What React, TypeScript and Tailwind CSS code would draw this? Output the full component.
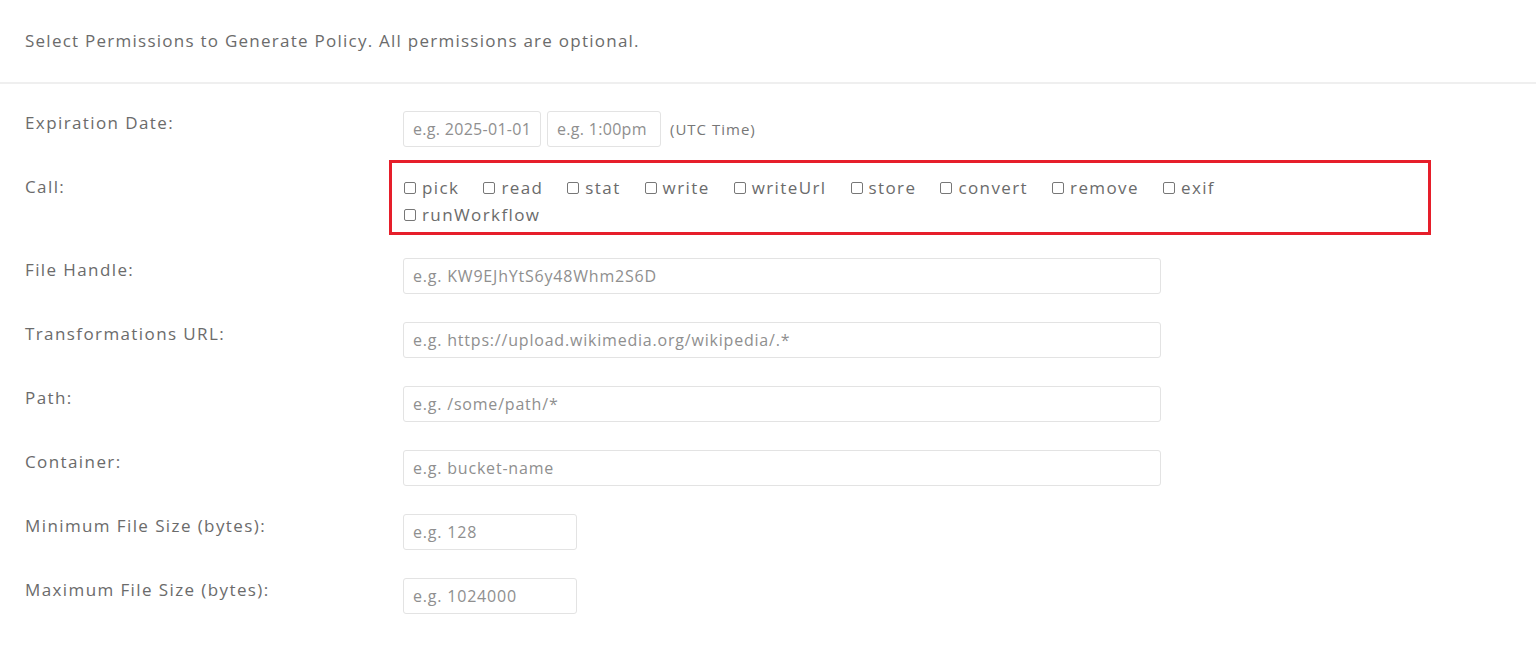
import { useState } from 'react'

const CALLS = ['pick', 'read', 'stat', 'write', 'writeUrl', 'store', 'convert', 'remove', 'exif', 'runWorkflow']

const font = { fontFamily: '"Open Sans", "Liberation Sans", sans-serif' }

function Field({ placeholder, width, tight }: { placeholder: string; width: string; tight?: boolean }) {
  return (
    <input
      type="text"
      placeholder={placeholder}
      className={`${width} ${tight ? 'tracking-[0.3px]' : 'tracking-[0.8px]'} h-[36px] rounded-[3px] border border-[#e3e3e3] bg-white px-[9px] text-[16px] text-[#555] placeholder:text-[#8f8f8f] outline-none`}
    />
  )
}

function Row({ label, children }: { label: string; children: React.ReactNode }) {
  return (
    <div className="flex items-start">
      <div className="w-[378px] shrink-0 text-[17px] leading-6 tracking-[1.4px] text-[#6b6b6b]">{label}</div>
      <div className="flex-1">{children}</div>
    </div>
  )
}

export default function App() {
  const [checked, setChecked] = useState<Record<string, boolean>>({})

  return (
    <div className="min-h-screen bg-white" style={font}>
      {/* header */}
      <div className="flex h-[84px] items-center border-b-2 border-[#efefef] px-[25px]">
        <p className="text-[17px] tracking-[1.25px] text-[#6b6b6b]">
          Select Permissions to Generate Policy. All permissions are optional.
        </p>
      </div>

      <div className="pl-[25px] pt-[27px]">
        <Row label="Expiration Date:">
          <div className="flex items-center gap-[6px]">
            <Field placeholder="e.g. 2025-01-01" width="w-[138px]" tight />
            <Field placeholder="e.g. 1:00pm" width="w-[114px]" tight />
            <span className="ml-[3px] text-[15px] tracking-[1px] text-[#777]">(UTC Time)</span>
          </div>
        </Row>

        <div className="mt-[13px] flex items-start">
          <div className="w-[378px] shrink-0 pt-[15px] text-[17px] leading-6 tracking-[1.4px] text-[#6b6b6b]">
            Call:
          </div>
          <div className="ml-[-14px] h-[75px] w-[1042px] border-[3px] border-[#e61e2a] pl-[12px] pt-[11px]">
            <div className="flex w-[900px] flex-wrap gap-x-[24px]">
              {CALLS.map((c) => (
                <label
                  key={c}
                  className="flex h-[27px] items-center gap-[6px] text-[17px] tracking-[1.4px] text-[#6b6b6b]"
                >
                  <input
                    type="checkbox"
                    checked={!!checked[c]}
                    onChange={() => setChecked({ ...checked, [c]: !checked[c] })}
                    className="h-[12px] w-[12px] appearance-none rounded-[2px] border border-[#777] bg-white"
                  />
                  {c}
                </label>
              ))}
            </div>
          </div>
        </div>

        <div className="mt-[23px] flex flex-col gap-[28px]">
          <Row label="File Handle:">
            <Field placeholder="e.g. KW9EJhYtS6y48Whm2S6D" width="w-[758px]" />
          </Row>
          <Row label="Transformations URL:">
            <Field placeholder="e.g. https://upload.wikimedia.org/wikipedia/.*" width="w-[758px]" />
          </Row>
          <Row label="Path:">
            <Field placeholder="e.g. /some/path/*" width="w-[758px]" />
          </Row>
          <Row label="Container:">
            <Field placeholder="e.g. bucket-name" width="w-[758px]" />
          </Row>
          <Row label="Minimum File Size (bytes):">
            <Field placeholder="e.g. 128" width="w-[174px]" />
          </Row>
          <Row label="Maximum File Size (bytes):">
            <Field placeholder="e.g. 1024000" width="w-[174px]" />
          </Row>
        </div>
      </div>
    </div>
  )
}
